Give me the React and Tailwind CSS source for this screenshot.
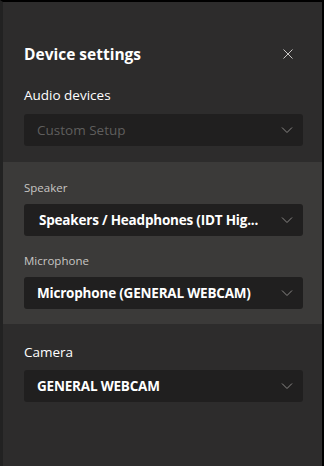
const font = { fontFamily: '"Segoe UI", "Open Sans", "Noto Sans", sans-serif' };

const Chevron = () => (
  <svg width="12" height="12" viewBox="0 0 12 12" fill="none" className="text-[#8a8886]">
    <path d="M1 3.5 L6 8.5 L11 3.5" stroke="currentColor" strokeWidth="1" />
  </svg>
);

const Select = ({ value, muted, indent = 'pl-[13px]', className = '' }) => (
  <div
    className={`flex h-8 items-center justify-between rounded-[3px] bg-[#201f1f] pr-[10px] ${className}`}
  >
    <span
      className={`truncate ${indent} text-[13.5px] ${muted ? 'text-[#5f5e5d]' : 'font-bold tracking-[-0.2px] text-white'}`}
    >
      {value}
    </span>
    <Chevron />
  </div>
);

export default function App() {
  return (
    <div
      className="flex h-[466px] w-[324px] flex-col border-t-2 border-r-2 border-l-[3px] border-t-black border-r-black border-l-[#222] bg-[#2d2c2c] text-white"
      style={font}
    >
      <div className="flex flex-col pt-[42px] pr-[19px] pl-[21px]">
        <div className="flex h-5 items-center justify-between">
          <h1 className="text-[15.5px] font-bold leading-5">Device settings</h1>
          <svg width="10" height="10" viewBox="0 0 10 10" className="mr-[10px] text-[#c8c6c4]">
            <path d="M0.5 0.5 L9.5 9.5 M9.5 0.5 L0.5 9.5" stroke="currentColor" strokeWidth="1" />
          </svg>
        </div>
        <div className="mt-[21px] text-[13.5px] leading-5">Audio devices</div>
        <Select className="mt-[9px]" value="Custom Setup" muted />
      </div>

      <div className="mt-4 flex flex-col bg-[#3b3a39] pt-[18px] pr-[19px] pb-[15px] pl-[21px]">
        <div className="text-[11.5px] leading-4 text-[#c8c6c4]">Speaker</div>
        <Select className="mt-[8px]" indent="pl-[15px]" value="Speakers / Headphones (IDT Hig..." />
        <div className="mt-[17px] text-[11.5px] leading-4 text-[#c8c6c4]">Microphone</div>
        <Select className="mt-[8px]" value="Microphone (GENERAL WEBCAM)" />
      </div>

      <div className="flex flex-col pt-[18px] pr-[19px] pl-[21px]">
        <div className="text-[13.5px] leading-5">Camera</div>
        <Select className="mt-[8px]" value="GENERAL WEBCAM" />
      </div>
    </div>
  );
}
